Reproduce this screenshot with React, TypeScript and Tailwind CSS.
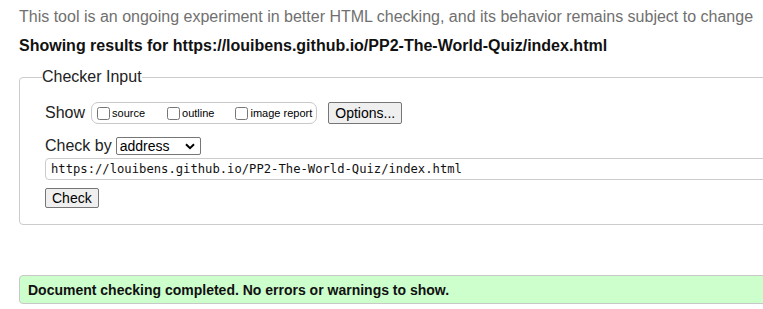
import React from "react";

export default function App() {
  return (
    <div className="w-[763px] h-[309px] overflow-hidden bg-white text-black font-['Liberation_Sans',Arial,sans-serif]">
      <div className="pl-[19px] pt-[8px]">
        <p className="text-[16px] leading-[18px] text-[#707070] whitespace-nowrap">
          This tool is an ongoing experiment in better HTML checking, and its behavior remains subject to change
        </p>
        <p className="mt-[11px] text-[16px] leading-[18px] font-bold text-[#111] whitespace-nowrap">
          Showing results for https://louibens.github.io/PP2-The-World-Quiz/index.html
        </p>
        <fieldset className="mt-[13px] w-[800px] border border-[#cccccc] rounded-[4px] pl-[25px] pb-[16px]">
          <legend className="ml-[-3px] text-[16px] leading-[18px] text-[#222]">Checker Input</legend>
          <div className="mt-[16px] flex items-center h-[22px]">
            <span className="text-[16px] leading-[18px] text-[#222]">Show</span>
            <div className="ml-[6px] flex items-center h-[22px] border border-[#c8c8c8] rounded-[7px] pl-[5px] pr-[4px]">
              <label className="flex items-center">
                <input type="checkbox" className="w-[13px] h-[13px] m-0" />
                <span className="ml-[2px] text-[11px] leading-[13px]">source</span>
              </label>
              <label className="ml-[22px] flex items-center">
                <input type="checkbox" className="w-[13px] h-[13px] m-0" />
                <span className="ml-[2px] text-[11px] leading-[13px]">outline</span>
              </label>
              <label className="ml-[21px] flex items-center">
                <input type="checkbox" className="w-[13px] h-[13px] m-0" />
                <span className="ml-[2px] text-[11px] leading-[13px]">image report</span>
              </label>
            </div>
            <button className="ml-[11px] h-[22px] px-[6px] bg-[#efefef] border border-[#767676] rounded-[2px] text-[14px] leading-[16px]">
              Options...
            </button>
          </div>
          <div className="mt-[13px] flex items-center h-[18px]">
            <span className="text-[16px] leading-[18px] text-[#222]">Check by</span>
            <div className="relative ml-[4px] h-[18px]">
              <select className="block appearance-none w-[85px] h-[18px] border border-[#767676] rounded-[2px] bg-white pl-[3px] text-[14px] leading-[16px]">
                <option>address</option>
              </select>
              <svg className="absolute right-[6px] top-[6px] pointer-events-none" width="10" height="7" viewBox="0 0 10 7">
                <path d="M1 1.2 L5 5.2 L9 1.2" stroke="#000" strokeWidth="2" fill="none" />
              </svg>
            </div>
          </div>
          <input
            type="text"
            readOnly
            value="https://louibens.github.io/PP2-The-World-Quiz/index.html"
            className="block mt-[3px] w-[760px] h-[22px] border border-[#cccccc] rounded-[4px] pl-[5px] text-[12.2px] font-['DejaVu_Sans_Mono',monospace] text-[#111] outline-none"
          />
          <button className="block mt-[8px] h-[20px] px-[6px] bg-[#efefef] border border-[#767676] rounded-[2px] text-[14px] leading-[16px]">
            Check
          </button>
        </fieldset>
        <div className="mt-[50px] w-[800px] h-[29px] flex items-center border border-[#c8c8c8] rounded-[4px] bg-[#ccffcc] pl-[8px]">
          <span className="text-[14px] leading-[16px] font-bold text-[#111]">
            Document checking completed. No errors or warnings to show.
          </span>
        </div>
      </div>
    </div>
  );
}
